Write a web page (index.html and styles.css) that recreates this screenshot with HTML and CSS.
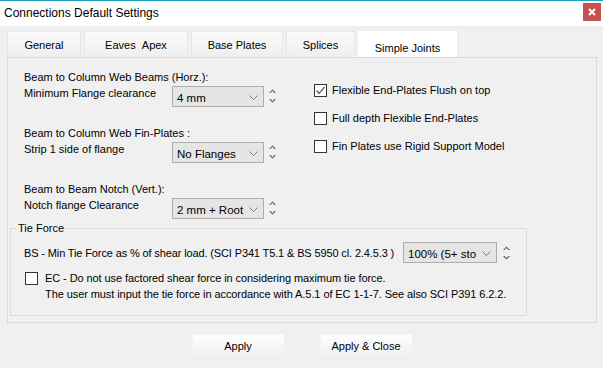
FILE: index.html
```html
<!DOCTYPE html>
<html>
<head>
<meta charset="utf-8">
<link rel="stylesheet" href="styles.css">
</head>
<body>
<div class="window">
  <div class="titlebar">
    <span class="title">Connections Default Settings</span>
    <div class="close"><svg width="8" height="8" viewBox="0 0 8 8"><path d="M1 1L7 7M7 1L1 7" stroke="#fff" stroke-width="2"/></svg></div>
  </div>
  <div class="tabs">
    <div class="tab t1">General</div>
    <div class="tab t2">Eaves &nbsp;Apex</div>
    <div class="tab t3">Base Plates</div>
    <div class="tab t4">Splices</div>
    <div class="tab active t5">Simple Joints</div>
  </div>
  <div class="panel">
    <div class="top">
      <div class="leftcol">
        <div class="grp">
          <div class="line">Beam to Column Web Beams (Horz.):</div>
          <div class="row">
            <div class="lbl">Minimum Flange clearance</div>
            <div class="select"><span>4 mm</span><svg class="chev" width="9" height="5" viewBox="0 0 9 5"><path d="M0.5 0.5L4.5 4.5L8.5 0.5" fill="none" stroke="#7a7a7a"/></svg></div>
            <div class="spin"><svg width="9" height="16" viewBox="0 0 9 16"><path d="M1 5L4.5 1.5L8 5L6.5 5L4.5 3L2.5 5Z" fill="#4a5f80"/><path d="M1 11L4.5 14.5L8 11L6.5 11L4.5 13L2.5 11Z" fill="#4a5f80"/></svg></div>
          </div>
        </div>
        <div class="grp">
          <div class="line">Beam to Column Web Fin-Plates :</div>
          <div class="row">
            <div class="lbl">Strip 1 side of flange</div>
            <div class="select"><span>No Flanges</span><svg class="chev" width="9" height="5" viewBox="0 0 9 5"><path d="M0.5 0.5L4.5 4.5L8.5 0.5" fill="none" stroke="#7a7a7a"/></svg></div>
            <div class="spin"><svg width="9" height="16" viewBox="0 0 9 16"><path d="M1 5L4.5 1.5L8 5L6.5 5L4.5 3L2.5 5Z" fill="#4a5f80"/><path d="M1 11L4.5 14.5L8 11L6.5 11L4.5 13L2.5 11Z" fill="#4a5f80"/></svg></div>
          </div>
        </div>
        <div class="grp">
          <div class="line">Beam to Beam Notch (Vert.):</div>
          <div class="row">
            <div class="lbl">Notch flange Clearance</div>
            <div class="select"><span>2 mm + Root</span><svg class="chev" width="9" height="5" viewBox="0 0 9 5"><path d="M0.5 0.5L4.5 4.5L8.5 0.5" fill="none" stroke="#7a7a7a"/></svg></div>
            <div class="spin"><svg width="9" height="16" viewBox="0 0 9 16"><path d="M1 5L4.5 1.5L8 5L6.5 5L4.5 3L2.5 5Z" fill="#4a5f80"/><path d="M1 11L4.5 14.5L8 11L6.5 11L4.5 13L2.5 11Z" fill="#4a5f80"/></svg></div>
          </div>
        </div>
      </div>
      <div class="rightcol">
        <div class="chk"><span class="box"><svg width="11" height="11" viewBox="0 0 11 11"><path d="M1.5 5.5L4 8.5L9.5 2" fill="none" stroke="#606060" stroke-width="1.2"/></svg></span>Flexible End-Plates Flush on top</div>
        <div class="chk"><span class="box"></span>Full depth Flexible End-Plates</div>
        <div class="chk"><span class="box"></span>Fin Plates use Rigid Support Model</div>
      </div>
    </div>
    <fieldset class="tie">
      <legend>Tie Force</legend>
      <div class="tiebody">
        <div class="bsrow">
          <div class="bslbl">BS - Min Tie Force as % of shear load. (SCI P341 T5.1 &amp; BS 5950 cl. 2.4.5.3 )</div>
          <div class="select"><span>100% (5+ sto</span><svg class="chev" width="9" height="5" viewBox="0 0 9 5"><path d="M0.5 0.5L4.5 4.5L8.5 0.5" fill="none" stroke="#7a7a7a"/></svg></div>
          <div class="spin"><svg width="9" height="16" viewBox="0 0 9 16"><path d="M1 5L4.5 1.5L8 5L6.5 5L4.5 3L2.5 5Z" fill="#4a5f80"/><path d="M1 11L4.5 14.5L8 11L6.5 11L4.5 13L2.5 11Z" fill="#4a5f80"/></svg></div>
        </div>
        <div class="ecrow">
          <span class="box"></span>
          <div class="ectext">EC - Do not use factored shear force in considering maximum tie force.<br>The user must input the tie force in accordance with A.5.1 of EC 1-1-7. See also SCI P391 6.2.2.</div>
        </div>
      </div>
    </fieldset>
  </div>
  <div class="buttons">
    <div class="btn">Apply</div>
    <div class="btn">Apply &amp; Close</div>
  </div>
</div>
</body>
</html>
```

FILE: styles.css
```css
* { box-sizing: border-box; }
html, body {
  margin: 0;
  padding: 0;
}
body {
  width: 603px;
  height: 368px;
  background: #f0f0f0;
  font-family: "Liberation Sans", Arial, sans-serif;
  font-size: 11px;
  color: #000;
  overflow: hidden;
}
.window {
  display: flex;
  flex-direction: column;
  height: 368px;
}
.titlebar {
  height: 26px;
  border-top: 1px solid #1f9fbf;
  background: #fff;
  display: flex;
  justify-content: space-between;
  align-items: flex-start;
  padding-left: 4px;
  padding-right: 2px;
}
.title {
  line-height: 16px;
  margin-top: 4px;
  font-size: 12px;
}
.close {
  width: 18px;
  height: 18px;
  margin-top: 2px;
  background: #c75050;
  display: flex;
  align-items: center;
  justify-content: center;
}
.close svg { display: block; }
.tabs {
  display: flex;
  align-items: flex-start;
  height: 26px;
  margin-top: 5px;
  padding-left: 7px;
  gap: 3px;
}
.tab {
  height: 24px;
  background: linear-gradient(#fbfbfb, #efefef);
  border: 1px solid #e6e6e6;
  border-bottom: none;
  display: flex;
  align-items: center;
  justify-content: center;
  padding-top: 2px;
}
.t1 { width: 74px; }
.t2 { width: 104px; }
.t3 { width: 92px; }
.t4 { width: 69px; }
.t5 { width: 99px; }
.tab.active {
  height: 26px;
  background: #fff;
  border-color: #fff;
  padding-top: 6px;
}
.panel {
  margin: 0 6px 0 7px;
  height: 266px;
  border: 1px solid #d9d9d9;
  padding-top: 11px;
  display: flex;
  flex-direction: column;
}
.top {
  display: flex;
  padding-left: 16px;
}
.leftcol {
  width: 290px;
  display: flex;
  flex-direction: column;
  gap: 18px;
}
.line {
  line-height: 16px;
  height: 16px;
  white-space: nowrap;
}
.row {
  display: flex;
  align-items: flex-start;
}
.lbl {
  width: 148px;
  line-height: 16px;
  white-space: nowrap;
}
.select {
  width: 92px;
  height: 21px;
  margin-top: 1px;
  border: 1px solid #adadad;
  background: #e5e5e5;
  display: flex;
  align-items: center;
  justify-content: space-between;
  padding: 2px 5px 0 4px;
  white-space: nowrap;
  font-size: 11.5px;
}
.chev { display: block; margin-top: -1px; }
.spin {
  width: 12px;
  margin-left: 2px;
  margin-top: 3px;
  display: flex;
  justify-content: center;
}
.spin svg { display: block; }
.rightcol {
  display: flex;
  flex-direction: column;
  gap: 12px;
  padding-top: 13px;
}
.chk {
  display: flex;
  align-items: center;
  line-height: 16px;
  height: 16px;
  white-space: nowrap;
}
.box {
  width: 13px;
  height: 13px;
  border: 1px solid #333;
  background: #fff;
  margin-right: 5px;
  display: flex;
  align-items: center;
  justify-content: center;
  flex: none;
}
.box svg { display: block; }
.tie {
  margin: 1px 0 0 2px;
  width: 517px;
  border: 1px solid #dcdcdc;
  padding: 0 0 13px 5px;
  min-width: 0;
}
.tie legend {
  padding: 0 2px;
  line-height: 16px;
  font-size: 11px;
}
.tiebody {
  padding-left: 8px;
}
.bsrow {
  display: flex;
  align-items: center;
  margin-top: 6px;
}
.bslbl {
  width: 379px;
  white-space: nowrap;
  line-height: 16px;
  letter-spacing: -0.13px;
}
.bsrow .select { width: 94px; margin-top: 0; }
.bsrow .spin { margin-top: 0; margin-left: 3px; }
.ecrow {
  display: flex;
  align-items: flex-start;
  margin-top: 7px;
  padding-left: 1px;
}
.ecrow .box {
  margin-top: 2px;
  margin-right: 7px;
}
.ectext {
  line-height: 16px;
  white-space: nowrap;
  letter-spacing: -0.08px;
}
.buttons {
  display: flex;
  justify-content: center;
  gap: 35px;
  margin-top: 11px;
  padding-left: 1px;
}
.btn {
  width: 93px;
  height: 23px;
  background: linear-gradient(#fdfdfd, #f1f1f1);
  border: 1px solid #f3f3f3;
  display: flex;
  align-items: center;
  justify-content: center;
}
```
